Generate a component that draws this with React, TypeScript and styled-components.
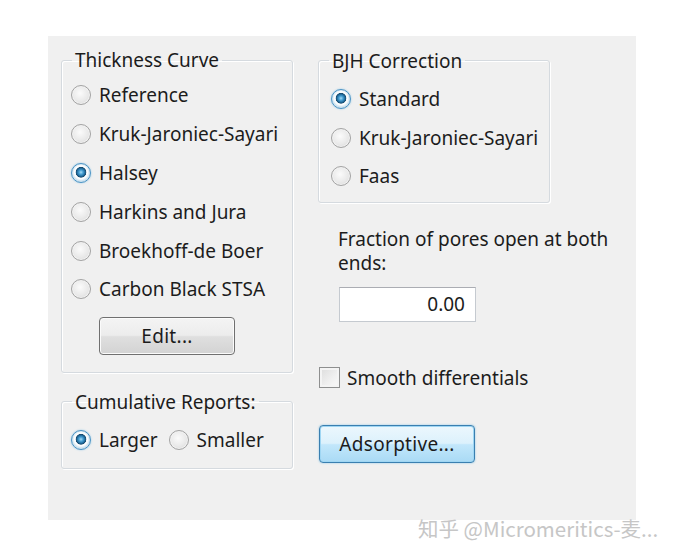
import React from 'react';
import styled, { createGlobalStyle } from 'styled-components';

const GlobalStyle = createGlobalStyle`
  html, body {
    margin: 0;
    padding: 0;
    background: #ffffff;
  }
  body {
    font-family: "Noto Sans", "Liberation Sans", sans-serif;
    font-size: 19px;
    color: #1c1c1c;
  }
  #root {
    position: relative;
    width: 675px;
    height: 556px;
    overflow: hidden;
  }
`;

const Page = styled.div`
  width: 675px;
  height: 556px;
  padding: 36px 0 0 48px;
  box-sizing: border-box;
`;

const Dialog = styled.div`
  width: 588px;
  height: 484px;
  box-sizing: border-box;
  padding: 13px 0 0 13px;
  background: #f0f0f0;
  display: grid;
  grid-template-columns: 232px 232px;
  column-gap: 25px;
  align-items: start;
`;

const Column = styled.div<{ $offset?: number }>`
  display: flex;
  flex-direction: column;
  margin-top: ${p => p.$offset ?? 0}px;
`;

const Group = styled.fieldset<{ $gap?: number }>`
  margin: ${p => p.$gap ?? 0}px 0 0 0;
  padding: 0;
  min-width: 0;
  border: 1px solid #d5dadf;
  border-radius: 3px;
  box-shadow: inset 1px 1px 0 #ffffff, 1px 1px 0 #ffffff;
`;

const Legend = styled.legend`
  margin-left: 10px;
  padding: 0 3px;
  line-height: 22px;
`;

const GroupBody = styled.div<{ $top: number; $bottom: number; $left: number }>`
  padding: ${p => p.$top}px 0 ${p => p.$bottom}px ${p => p.$left}px;
`;

const RadioRow = styled.label`
  display: flex;
  align-items: center;
  height: 38.8px;
  gap: 8px;
  white-space: nowrap;
`;

const InlineRadios = styled.div`
  display: flex;
  align-items: center;
  gap: 11px;
`;

const RadioDot = styled.span<{ $checked?: boolean }>`
  flex: none;
  width: 20px;
  height: 20px;
  box-sizing: border-box;
  border-radius: 50%;
  border: 1px solid ${p => (p.$checked ? '#4a93c4' : '#a3a3a3')};
  background: ${p =>
    p.$checked
      ? 'radial-gradient(circle at 50% 46%, #a8dcf5 0, #4aa3d6 2px, #1f6a9c 4px, #17496b 5px, #f4f8fb 5.6px, #ffffff 6.5px, #cfe4f1 8.5px)'
      : 'radial-gradient(circle at 45% 40%, #fbfbfb 0, #e9e9e9 55%, #d2d2d2 100%)'};
  box-shadow: ${p => (p.$checked ? '0 0 2px #8cc5e6' : 'inset 0 0 0 1px #f3f3f3')};
`;

const PushButton = styled.button<{ $focused?: boolean; $width: number }>`
  width: ${p => p.$width}px;
  height: 38px;
  padding: 0;
  font-family: inherit;
  font-size: 19px;
  letter-spacing: 0.3px;
  color: #1c1c1c;
  border-radius: 4px;
  border: 1px solid ${p => (p.$focused ? '#3a7fb0' : '#707070')};
  background: ${p =>
    p.$focused
      ? 'linear-gradient(#ecf7fd 0%, #dcf1fc 48%, #c2e7fb 52%, #a9daf5 100%)'
      : 'linear-gradient(#f4f4f4 0%, #ececec 48%, #dfdfdf 52%, #d3d3d3 100%)'};
  box-shadow: ${p =>
    p.$focused ? 'inset 0 0 0 1px #9fd6f3, 0 0 2px #7fc1e6' : 'inset 0 0 0 1px #fbfbfb'};
`;

const EditButton = styled(PushButton)`
  margin: 8px 0 0 28px;
`;

const FieldLabel = styled.div`
  margin: 24px 0 0 20px;
  line-height: 24px;
  white-space: nowrap;
`;

const NumberBox = styled.div`
  width: 137px;
  height: 35px;
  box-sizing: border-box;
  margin: 12px 0 0 21px;
  padding-right: 10px;
  display: flex;
  align-items: center;
  justify-content: flex-end;
  background: #ffffff;
  border: 1px solid #c5cad0;
  border-top-color: #abadb3;
`;

const CheckRow = styled.label`
  display: flex;
  align-items: center;
  gap: 7px;
  height: 24px;
  margin: 44px 0 0 1px;
  white-space: nowrap;
`;

const CheckBox = styled.span`
  flex: none;
  width: 21px;
  height: 21px;
  box-sizing: border-box;
  border: 1px solid #8e8f8f;
  background: linear-gradient(135deg, #dcdcdc 0%, #f0f0f0 60%, #fafafa 100%);
  box-shadow: inset 0 0 0 2px #f4f4f4;
`;

const AdsorptiveButton = styled(PushButton)`
  margin: 35px 0 0 1px;
`;

const Watermark = styled.div`
  position: absolute;
  left: 418px;
  top: 514px;
  font-family: "Noto Sans CJK SC", "Noto Sans", sans-serif;
  font-size: 20.5px;
  line-height: 28px;
  color: #c6c6c6;
  white-space: nowrap;
`;

const thicknessCurves = [
  'Reference',
  'Kruk-Jaroniec-Sayari',
  'Halsey',
  'Harkins and Jura',
  'Broekhoff-de Boer',
  'Carbon Black STSA',
];

const bjhOptions = ['Standard', 'Kruk-Jaroniec-Sayari', 'Faas'];

const App: React.FC = () => {
  const thickness = 'Halsey';
  const bjh = 'Standard';

  return (
    <>
      <GlobalStyle />
      <Page>
        <Dialog>
          <Column>
            <Group>
              <Legend>Thickness Curve</Legend>
              <GroupBody $top={5} $bottom={17} $left={9}>
                {thicknessCurves.map(name => (
                  <RadioRow key={name}>
                    <RadioDot $checked={name === thickness} />
                    {name}
                  </RadioRow>
                ))}
                <EditButton $width={136}>Edit...</EditButton>
              </GroupBody>
            </Group>

            <Group $gap={18}>
              <Legend>Cumulative Reports:</Legend>
              <GroupBody $top={8} $bottom={8} $left={9}>
                <InlineRadios>
                  <RadioRow>
                    <RadioDot $checked />
                    Larger
                  </RadioRow>
                  <RadioRow>
                    <RadioDot />
                    Smaller
                  </RadioRow>
                </InlineRadios>
              </GroupBody>
            </Group>
          </Column>

          <Column $offset={0.5}>
            <Group>
              <Legend>BJH Correction</Legend>
              <GroupBody $top={8} $bottom={6} $left={12}>
                {bjhOptions.map(name => (
                  <RadioRow key={name}>
                    <RadioDot $checked={name === bjh} />
                    {name}
                  </RadioRow>
                ))}
              </GroupBody>
            </Group>

            <FieldLabel>
              Fraction of pores open at both
              <br />
              ends:
            </FieldLabel>
            <NumberBox>0.00</NumberBox>

            <CheckRow>
              <CheckBox />
              Smooth differentials
            </CheckRow>

            <AdsorptiveButton $focused $width={156}>
              Adsorptive...
            </AdsorptiveButton>
          </Column>
        </Dialog>
      </Page>
      <Watermark>知乎 @Micromeritics-麦...</Watermark>
    </>
  );
};

export default App;
